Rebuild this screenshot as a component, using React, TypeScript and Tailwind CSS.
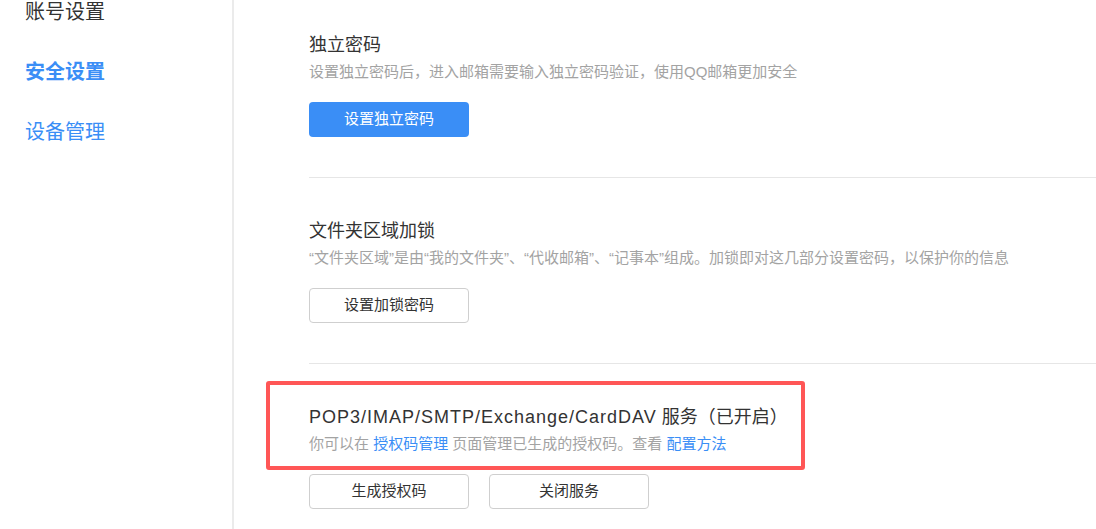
const sidebarItems = [
  { label: '账号设置', cls: 'text-[#333333]' },
  { label: '安全设置', cls: 'text-[#3a8ef6] font-bold' },
  { label: '设备管理', cls: 'text-[#3a8ef6]' },
];

function Section({
  title,
  desc,
  children,
}: {
  title: React.ReactNode;
  desc: React.ReactNode;
  children: React.ReactNode;
}) {
  return (
    <div className="relative border-b border-[#e6e6e6] pt-[41px] pb-[40px]">
      <div className="text-[18px] leading-[24px] text-[#333333] whitespace-nowrap">{title}</div>
      <div className="mt-[5px] text-[15px] leading-[20px] text-[#a3a3a3] whitespace-nowrap">{desc}</div>
      <div className="mt-[20px] flex gap-5">{children}</div>
    </div>
  );
}

export default function App() {
  const outlineBtn =
    'h-[35px] w-[160px] rounded-[4px] border border-[#cfcfcf] bg-white text-[15px] text-[#333333]';

  return (
    <div className="flex h-screen overflow-hidden bg-white font-['Liberation_Sans','Noto_Sans_CJK_SC',sans-serif]">
      <aside className="w-[234px] shrink-0 border-r-2 border-[#ebebeb] pl-[25px]">
        <ul className="-mt-[18px]">
          {sidebarItems.map((item) => (
            <li key={item.label} className={`text-[20px] leading-[60px] ${item.cls}`}>
              {item.label}
            </li>
          ))}
        </ul>
      </aside>

      <main className="flex-1 pl-[75px]">
        <div className="-mt-[8px]">
          <Section title="独立密码" desc="设置独立密码后，进入邮箱需要输入独立密码验证，使用QQ邮箱更加安全">
            <button className="h-[35px] w-[160px] rounded-[4px] bg-[#3a8ef6] text-[15px] text-white">
              设置独立密码
            </button>
          </Section>

          <Section
            title="文件夹区域加锁"
            desc="“文件夹区域”是由“我的文件夹”、“代收邮箱”、“记事本”组成。加锁即对这几部分设置密码，以保护你的信息"
          >
            <button className={outlineBtn}>设置加锁密码</button>
          </Section>

          <Section
            title={
              <>
                <span className="tracking-[1px]">POP3/IMAP/SMTP/Exchange/CardDAV</span> 服务（已开启）
              </>
            }
            desc={
              <>
                你可以在 <span className="text-[#3a8ef6]">授权码管理</span> 页面管理已生成的授权码。查看{' '}
                <span className="text-[#3a8ef6]">配置方法</span>
              </>
            }
          >
            <button className={outlineBtn}>生成授权码</button>
            <button className={outlineBtn}>关闭服务</button>
          </Section>
        </div>

        {/* red highlight annotation over the POP3 block */}
        <div className="pointer-events-none absolute left-[266px] top-[381px] h-[89px] w-[539px] rounded-[3px] border-4 border-[#ff5656]" />
      </main>
    </div>
  );
}
